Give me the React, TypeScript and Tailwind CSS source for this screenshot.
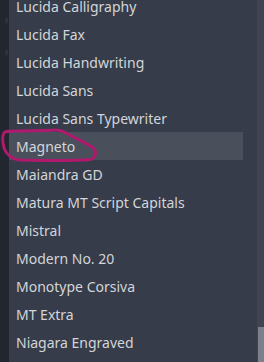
import React from "react";

const fonts = [
  "Lucida Calligraphy",
  "Lucida Fax",
  "Lucida Handwriting",
  "Lucida Sans",
  "Lucida Sans Typewriter",
  "Magneto",
  "Maiandra GD",
  "Matura MT Script Capitals",
  "Mistral",
  "Modern No. 20",
  "Monotype Corsiva",
  "MT Extra",
  "Niagara Engraved",
];

export default function App() {
  return (
    <div
      className="relative flex h-[362px] w-[264px] overflow-hidden bg-[#363c49]"
      style={{ fontFamily: '"Noto Sans", "Open Sans", sans-serif' }}
    >
      <div className="relative w-[9px] shrink-0 bg-[#22262e]">
        <div className="absolute left-[5px] top-[18px] h-[5px] w-[3px] bg-[#2c313b]" />
        <div className="absolute left-[5px] top-[50px] h-[5px] w-[3px] bg-[#2c313b]" />
      </div>
      <div className="flex min-w-0 flex-1 flex-col">
        <div className="mt-[-8px] flex flex-col">
          {fonts.map((f) => (
            <div
              key={f}
              className={
                "mr-[14px] flex h-[28px] shrink-0 items-center whitespace-nowrap pl-[7px] text-[14px] text-[#d2d5da] " +
                (f === "Magneto" ? "bg-[#4a505b]" : "")
              }
            >
              {f}
            </div>
          ))}
        </div>
      </div>
      <div className="relative w-[7px] shrink-0 bg-[#3e4451]">
        <div className="absolute bottom-0 left-[1px] h-[35px] w-[6px] bg-[#7b818b]" />
      </div>
      <svg
        className="pointer-events-none absolute left-0 top-0"
        width="264"
        height="362"
        viewBox="0 0 264 362"
      >
        <path
          d="M7 131.5 C 20 130.5, 40 131, 55 130 C 60 129.5, 62 130.5, 66 133 C 75 138, 86 143, 92 147 C 97 150, 96.5 157, 91 159.5 C 70 161, 40 160.5, 20 160 C 12 159.5, 6 154, 4 148 C 2.5 142, 2 136, 4 133 C 5 131.5, 8 131, 10 131.5"
          fill="none"
          stroke="#b01a6e"
          strokeWidth="3"
          strokeLinecap="round"
          strokeLinejoin="round"
        />
      </svg>
    </div>
  );
}
